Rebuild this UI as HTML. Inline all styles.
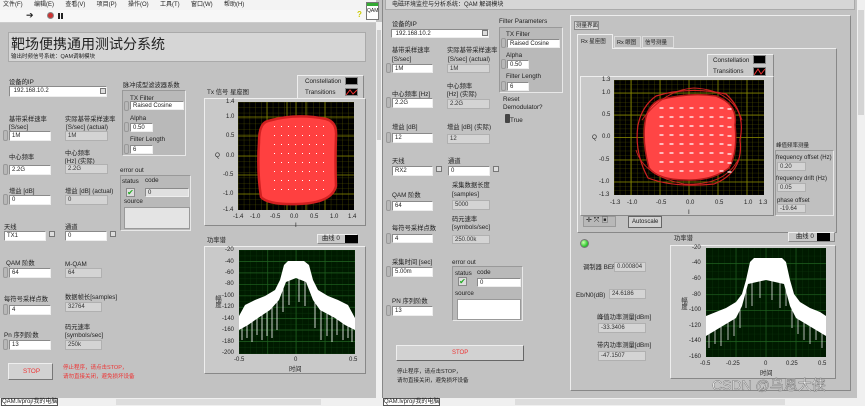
<!DOCTYPE html>
<html><head><meta charset="utf-8">
<style>
*{margin:0;padding:0;box-sizing:border-box}
body{width:865px;height:406px;overflow:hidden;background:#c2c2c2;font-family:"Liberation Sans","Noto Sans CJK SC",sans-serif;font-size:6.3px;color:#222;position:relative}
div,span{position:absolute}
.l{white-space:nowrap;line-height:8px}
.in{background:#fff;border:1px solid #8a8a8a;border-right-color:#eee;border-bottom-color:#eee;padding-left:2px;line-height:8px;font-size:6px}
.ind{background:#d4d4d4;border:1px solid #b0b0b0;padding-left:2px;line-height:8px;font-size:6px;color:#333}
.sp{width:5px;background:#b8b8b8;border:1px solid #999;border-radius:2px}
.btn{width:6px;height:6px;border:1px solid #777;background:#ddd}
.frame{background:#c9c9c9;border:1px solid #eee;border-right-color:#888;border-bottom-color:#888}
.box{background:#b9b9b9;border:1px solid #999;border-right-color:#e8e8e8;border-bottom-color:#e8e8e8}
.tk{font-size:6px;white-space:nowrap}
</style></head><body>

<!-- LEFT WINDOW -->
<div style="left:0;top:0;width:376px;height:10px;background:#f3f3f3"></div>
<div class="l" style="left:3px;top:1px;font-size:6px;word-spacing:4px">文件(F)&nbsp; 编辑(E)&nbsp; 查看(V)&nbsp; 项目(P)&nbsp; 操作(O)&nbsp; 工具(T)&nbsp; 窗口(W)&nbsp; 帮助(H)</div>
<div style="left:0;top:10px;width:376px;height:13px;background:#f7f7f7;border-bottom:1px solid #ccc"></div>
<div class="l" style="left:26px;top:11px;font-size:9px">➔</div>
<div style="left:47px;top:12px;width:7px;height:7px;border-radius:50%;background:#c33;border:1px solid #888"></div>
<div style="left:58px;top:13px;width:2px;height:6px;background:#222"></div>
<div style="left:61px;top:13px;width:2px;height:6px;background:#222"></div>
<div class="l" style="left:357px;top:11px;color:#cc0;font-weight:bold;font-size:8px">?</div>
<div style="left:366px;top:2px;width:13px;height:18px;background:#fff;border:1px solid #777"><div style="left:0;top:0;width:11px;height:3px;background:#3a3"></div><div class="l" style="left:0;top:4px;font-size:5px">QAM</div></div>
<div style="left:376px;top:22px;width:6px;height:376px;background:#f0f0f0"></div>
<div style="left:377px;top:30px;width:4px;height:110px;background:#cdcdcd"></div>

<div style="left:8px;top:32px;width:358px;height:30px;background:#d6d6d6;border:1px solid #aaa"></div>
<div class="l" style="left:11px;top:36px;font-size:14px;line-height:16px">靶场便携通用测试分系统</div>
<div class="l" style="left:11px;top:53px;font-size:5.5px">输出时频信号系统：QAM调制模块</div>

<div class="l" style="left:9px;top:79px">设备的IP</div>
<div class="in" style="left:9px;top:86px;width:98px;height:11px">&nbsp;192.168.10.2</div>
<div class="btn" style="left:100px;top:88px"></div>

<div class="l" style="left:9px;top:116px">基带采样速率</div><div class="l" style="left:9px;top:124px">[S/sec]</div>
<div class="sp" style="left:3px;top:130px;height:11px"></div><div class="in" style="left:9px;top:131px;width:42px;height:10px">1M</div>
<div class="l" style="left:65px;top:116px">实际基带采样速率</div><div class="l" style="left:66px;top:124px">[S/sec] (actual)</div>
<div class="ind" style="left:65px;top:131px;width:43px;height:10px">1M</div>

<div class="l" style="left:9px;top:154px">中心频率</div>
<div class="sp" style="left:3px;top:164px;height:11px"></div><div class="in" style="left:9px;top:165px;width:42px;height:10px">2.2G</div>
<div class="l" style="left:65px;top:150px">中心频率</div><div class="l" style="left:65px;top:158px">[Hz] (实际)</div>
<div class="ind" style="left:65px;top:164px;width:43px;height:10px">2.2G</div>

<div class="l" style="left:9px;top:188px">增益 [dB]</div>
<div class="sp" style="left:3px;top:194px;height:11px"></div><div class="in" style="left:9px;top:195px;width:42px;height:10px">0</div>
<div class="l" style="left:65px;top:188px">增益 [dB] (actual)</div>
<div class="ind" style="left:65px;top:195px;width:43px;height:10px">0</div>

<div class="l" style="left:4px;top:224px">天线</div>
<div class="in" style="left:4px;top:231px;width:42px;height:10px">TX1</div><div class="btn" style="left:49px;top:231px"></div>
<div class="l" style="left:65px;top:224px">通道</div>
<div class="in" style="left:65px;top:231px;width:42px;height:10px">0</div><div class="btn" style="left:110px;top:231px"></div>

<div class="l" style="left:6px;top:260px">QAM 阶数</div>
<div class="sp" style="left:3px;top:267px;height:11px"></div><div class="in" style="left:9px;top:268px;width:42px;height:10px">64</div>
<div class="l" style="left:65px;top:261px">M-QAM</div>
<div class="ind" style="left:65px;top:268px;width:37px;height:10px">64</div>

<div class="l" style="left:4px;top:296px">每符号采样点数</div>
<div class="sp" style="left:3px;top:304px;height:11px"></div><div class="in" style="left:9px;top:305px;width:42px;height:10px">4</div>
<div class="l" style="left:65px;top:294px">数据帧长[samples]</div>
<div class="ind" style="left:65px;top:302px;width:37px;height:10px">32764</div>

<div class="l" style="left:4px;top:332px">Pn 序列阶数</div>
<div class="sp" style="left:3px;top:339px;height:11px"></div><div class="in" style="left:9px;top:340px;width:42px;height:10px">13</div>
<div class="l" style="left:65px;top:324px">码元速率</div><div class="l" style="left:65px;top:332px">[symbols/sec]</div>
<div class="ind" style="left:65px;top:340px;width:37px;height:10px">250k</div>

<div style="left:8px;top:363px;width:45px;height:17px;background:#d2d2d2;border:1px solid #777;border-top-color:#eee;border-left-color:#eee"></div>
<div class="l" style="left:23px;top:368px;color:#e33">STOP</div>
<div class="l" style="left:63px;top:364px;color:#e33;font-size:5.5px">停止程序，请点击STOP，</div>
<div class="l" style="left:63px;top:373px;color:#e33;font-size:5.5px">请勿直接关闭，避免损坏设备</div>

<div class="l" style="left:123px;top:82px">脉冲成型滤波器系数</div>
<div class="box" style="left:122px;top:90px;width:64px;height:66px"></div>
<div class="l" style="left:130px;top:95px">TX Filter</div>
<div class="sp" style="left:124px;top:101px;height:10px"></div><div class="in" style="left:130px;top:101px;width:54px;height:9px">Raised Cosine</div>
<div class="l" style="left:130px;top:115px">Alpha</div>
<div class="sp" style="left:124px;top:122px;height:10px"></div><div class="in" style="left:130px;top:123px;width:23px;height:9px">0.50</div>
<div class="l" style="left:130px;top:136px">Filter Length</div>
<div class="sp" style="left:124px;top:144px;height:10px"></div><div class="in" style="left:130px;top:145px;width:23px;height:9px">6</div>

<div class="l" style="left:120px;top:167px">error out</div>
<div class="box" style="left:120px;top:175px;width:71px;height:56px"></div>
<div class="l" style="left:122px;top:178px">status</div><div class="l" style="left:145px;top:177px">code</div>
<div style="left:126px;top:188px;width:9px;height:9px;background:#ddd;border:1px solid #888;color:#2a2;font-size:8px;line-height:8px;text-align:center">✔</div>
<div class="in" style="left:145px;top:188px;width:44px;height:9px;background:#e0e0e0">0</div>
<div class="l" style="left:124px;top:198px">source</div>
<div style="left:124px;top:207px;width:66px;height:22px;background:#e4e4e4;border:1px solid #999"></div>

<div class="frame" style="left:297px;top:75px;width:67px;height:24px"></div>
<div class="l" style="left:305px;top:78px">Constellation</div><div class="l" style="left:305px;top:89px">Transitions</div>
<div style="left:345px;top:77px;width:13px;height:8px;background:#000;border:1px solid #888"></div>
<div style="left:345px;top:88px;width:13px;height:8px;background:#000;border:1px solid #888"><svg width="11" height="6" style="position:absolute;left:0;top:0"><polyline points="0,6 4,1 7,5 11,1" fill="none" stroke="#e33" stroke-width="1"/></svg></div>
<div class="l" style="left:207px;top:89px">Tx 信号 星座图</div>
<div class="frame" style="left:204px;top:98px;width:162px;height:128px"></div>
<svg style="position:absolute;left:238px;top:102px" width="116" height="108">
<defs><pattern id="gy" width="5.8" height="5.4" patternUnits="userSpaceOnUse"><path d="M0 0H5.8M0 0V5.4" stroke="#5a5a00" stroke-width="0.6"/></pattern></defs>
<rect width="116" height="108" fill="#000"/><rect width="116" height="108" fill="url(#gy)"/>
<path d="M29 0V108M49 0V108M58 0V108M68 0V108M87 0V108M0 15H116M0 34H116M0 54H116M0 73H116M0 92H116" stroke="#8a8a00" stroke-width="0.8"/>
<path d="M30 19 Q58 11 88 17 Q99 20 98 34 Q97 60 98 84 Q94 101 60 102 Q30 103 23 95 Q19 70 21 40 Q21 21 30 19Z" fill="#ff4040" stroke="#d02020" stroke-width="2.5"/>
<g fill="#fff"><g id="rw"><rect x="36" y="24" width="1" height="1"/><rect x="43" y="24" width="1" height="1"/><rect x="50" y="24" width="1" height="1"/><rect x="57" y="24" width="1" height="1"/><rect x="64" y="24" width="1" height="1"/><rect x="71" y="24" width="1" height="1"/><rect x="78" y="24" width="1" height="1"/><rect x="85" y="24" width="1" height="1"/></g>
<use href="#rw" y="9"/><use href="#rw" y="18"/><use href="#rw" y="27"/><use href="#rw" y="36"/><use href="#rw" y="45"/><use href="#rw" y="54"/><use href="#rw" y="63"/></g>
</svg>
<div class="tk" style="left:226px;top:99px">1.4</div><div class="tk" style="left:226px;top:114px">1.0</div><div class="tk" style="left:226px;top:133px">0.5</div><div class="tk" style="left:226px;top:153px">0.0</div><div class="tk" style="left:223px;top:172px">-0.5</div><div class="tk" style="left:223px;top:191px">-1.0</div><div class="tk" style="left:223px;top:207px">-1.4</div>
<div class="tk" style="left:233px;top:214px">-1.4</div><div class="tk" style="left:250px;top:214px">-1.0</div><div class="tk" style="left:270px;top:214px">-0.5</div><div class="tk" style="left:290px;top:214px">0.0</div><div class="tk" style="left:310px;top:214px">0.5</div><div class="tk" style="left:330px;top:214px">1.0</div><div class="tk" style="left:348px;top:214px">1.4</div>
<div class="l" style="left:295px;top:222px">I</div><div class="l" style="left:215px;top:152px">Q</div>

<div class="l" style="left:207px;top:237px">功率谱</div>
<div class="frame" style="left:317px;top:234px;width:41px;height:10px"></div>
<div class="l" style="left:322px;top:235px">曲线 0</div><div style="left:345px;top:235px;width:13px;height:8px;background:#000"></div>
<div class="frame" style="left:204px;top:246px;width:162px;height:128px"></div>
<svg style="position:absolute;left:239px;top:250px" width="116" height="104">
<defs><pattern id="gg" width="5.75" height="5.72" patternUnits="userSpaceOnUse"><path d="M0 0H5.75M0 0V5.72" stroke="#0c3a0c" stroke-width="0.6"/></pattern></defs>
<rect width="116" height="104" fill="#001a00"/><rect width="116" height="104" fill="url(#gg)"/>
<path d="M57 0V104M0 11.4H116M0 22.9H116M0 34.3H116M0 45.8H116M0 57.2H116M0 68.6H116M0 80H116M0 91.5H116M28.7 0V104M86 0V104" stroke="#1f5f1f" stroke-width="0.7"/>
<polygon fill="#fff" points="0,66 6,55 16,50 26,46 36,40 41,30 45,15 49,11 65,11 70,15 74,30 79,40 89,46 99,50 109,55 116,68 116,80 106,75 96,68 81,60 74,50 67,32 57,28 47,32 40,50 31,60 19,68 9,75 0,80"/>
<g stroke="#fff" stroke-width="0.8"><path d="M3 70V90M8 68V88M13 66V92M18 64V85M23 62V90M28 58V86M33 56V88M38 50V80M44 30V62M50 28V55M60 28V52M66 30V56M76 50V78M82 56V90M88 60V86M93 62V92M98 64V85M104 66V90M109 68V88M113 70V92"/></g>
</svg>
<div class="tk" style="left:225px;top:247px">-20</div><div class="tk" style="left:225px;top:259px">-40</div><div class="tk" style="left:225px;top:270px">-60</div><div class="tk" style="left:225px;top:281px">-80</div><div class="tk" style="left:222px;top:293px">-100</div><div class="tk" style="left:222px;top:304px">-120</div><div class="tk" style="left:222px;top:316px">-140</div><div class="tk" style="left:222px;top:327px">-160</div><div class="tk" style="left:222px;top:339px">-180</div><div class="tk" style="left:222px;top:350px">-200</div>
<div class="tk" style="left:234px;top:357px">-0.5</div><div class="tk" style="left:294px;top:357px">0</div><div class="tk" style="left:349px;top:357px">0.5</div>
<div class="l" style="left:289px;top:366px">时间</div><div class="l" style="left:213px;top:295px;writing-mode:vertical-rl">幅度</div>

<div style="left:0;top:398px;width:865px;height:8px;background:#f0f0f0"></div>
<div class="l" style="left:1px;top:398px;font-size:6px;border:1px solid #555;background:#fff;line-height:6px">QAM.lvproj/我的电脑</div>
<div style="left:116px;top:399px;width:205px;height:6px;background:#ddd"></div>
<div class="l" style="left:383px;top:398px;font-size:6px;border:1px solid #555;background:#fff;line-height:6px">QAM.lvproj/我的电脑</div>
<div style="left:515px;top:399px;width:270px;height:6px;background:#ddd"></div>

<!-- RIGHT WINDOW -->
<div style="left:382px;top:0;width:1px;height:398px;background:#888"></div>
<div style="left:385px;top:0;width:470px;height:10px;background:#d6d6d6;border:1px solid #aaa;border-top:none"></div>
<div class="l" style="left:392px;top:1px;font-size:6px">电磁环境监控与分析系统：QAM 解调模块</div>
<div style="left:857px;top:0;width:8px;height:398px;background:#f0f0f0"></div>
<div style="left:858px;top:10px;width:6px;height:105px;background:#d4d4d4"></div>

<div class="l" style="left:392px;top:21px">设备的IP</div>
<div class="in" style="left:391px;top:29px;width:98px;height:9px">&nbsp;192.168.10.2</div><div class="btn" style="left:482px;top:30px"></div>

<div class="l" style="left:392px;top:47px">基带采样速率</div><div class="l" style="left:392px;top:56px">[S/sec]</div>
<div class="sp" style="left:386px;top:63px;height:10px"></div><div class="in" style="left:392px;top:64px;width:41px;height:9px">1M</div>
<div class="l" style="left:447px;top:47px">实际基带采样速率</div><div class="l" style="left:448px;top:56px">[S/sec] (actual)</div>
<div class="ind" style="left:447px;top:64px;width:43px;height:9px">1M</div>

<div class="l" style="left:392px;top:91px">中心频率 [Hz]</div>
<div class="sp" style="left:386px;top:97px;height:11px"></div><div class="in" style="left:392px;top:98px;width:41px;height:10px">2.2G</div>
<div class="l" style="left:447px;top:83px">中心频率</div><div class="l" style="left:447px;top:91px">[Hz] (实际)</div>
<div class="ind" style="left:447px;top:99px;width:43px;height:10px">2.2G</div>

<div class="l" style="left:392px;top:124px">增益 [dB]</div>
<div class="sp" style="left:386px;top:132px;height:11px"></div><div class="in" style="left:392px;top:133px;width:41px;height:10px">12</div>
<div class="l" style="left:447px;top:124px">增益 [dB] (实际)</div>
<div class="ind" style="left:447px;top:134px;width:43px;height:10px">12</div>

<div class="l" style="left:392px;top:158px">天线</div>
<div class="in" style="left:392px;top:166px;width:41px;height:10px">RX2</div><div class="btn" style="left:436px;top:166px"></div>
<div class="l" style="left:448px;top:158px">通道</div>
<div class="in" style="left:448px;top:166px;width:42px;height:10px">0</div><div class="btn" style="left:493px;top:166px"></div>

<div class="l" style="left:392px;top:192px">QAM 阶数</div>
<div class="sp" style="left:386px;top:200px;height:11px"></div><div class="in" style="left:392px;top:201px;width:41px;height:10px">64</div>
<div class="l" style="left:452px;top:182px">采集数据长度</div><div class="l" style="left:452px;top:191px">[samples]</div>
<div class="ind" style="left:452px;top:200px;width:38px;height:10px">5000</div>

<div class="l" style="left:392px;top:225px">每符号采样点数</div>
<div class="sp" style="left:386px;top:233px;height:11px"></div><div class="in" style="left:392px;top:234px;width:41px;height:9px">4</div>
<div class="l" style="left:452px;top:216px">码元速率</div><div class="l" style="left:452px;top:224px">[symbols/sec]</div>
<div class="ind" style="left:452px;top:235px;width:38px;height:9px">250.00k</div>

<div class="l" style="left:392px;top:259px">采集时间 [sec]</div>
<div class="sp" style="left:386px;top:266px;height:11px"></div><div class="in" style="left:392px;top:267px;width:41px;height:10px">5.00m</div>
<div class="l" style="left:392px;top:298px">PN 序列阶数</div>
<div class="sp" style="left:386px;top:305px;height:11px"></div><div class="in" style="left:392px;top:306px;width:41px;height:10px">13</div>

<div class="l" style="left:452px;top:259px">error out</div>
<div class="box" style="left:452px;top:266px;width:71px;height:55px"></div>
<div class="l" style="left:455px;top:270px">status</div><div class="l" style="left:477px;top:269px">code</div>
<div style="left:458px;top:277px;width:9px;height:9px;background:#ddd;border:1px solid #888;color:#2a2;font-size:8px;line-height:8px;text-align:center">✔</div>
<div class="in" style="left:477px;top:278px;width:44px;height:9px">0</div>
<div class="l" style="left:455px;top:290px">source</div>
<div style="left:457px;top:299px;width:64px;height:21px;background:#fff;border:1px solid #999"></div>

<div style="left:396px;top:345px;width:128px;height:16px;background:#d2d2d2;border:1px solid #666;border-top-color:#eee;border-left-color:#eee"></div>
<div class="l" style="left:452px;top:349px;color:#e33;font-size:6px">STOP</div>
<div class="l" style="left:397px;top:368px;font-size:5.5px">停止程序，请点击STOP，</div>
<div class="l" style="left:397px;top:377px;font-size:5.5px">请勿直接关闭，避免损坏设备</div>

<div class="l" style="left:499px;top:18px">Filter Parameters</div>
<div class="box" style="left:499px;top:27px;width:64px;height:66px"></div>
<div class="l" style="left:506px;top:31px">TX Filter</div>
<div class="sp" style="left:501px;top:38px;height:10px"></div><div class="in" style="left:507px;top:39px;width:53px;height:9px">Raised Cosine</div>
<div class="l" style="left:506px;top:52px">Alpha</div>
<div class="sp" style="left:501px;top:59px;height:10px"></div><div class="in" style="left:507px;top:60px;width:22px;height:9px">0.50</div>
<div class="l" style="left:506px;top:73px">Filter Length</div>
<div class="sp" style="left:501px;top:81px;height:10px"></div><div class="in" style="left:507px;top:82px;width:22px;height:9px">6</div>
<div class="l" style="left:503px;top:96px">Reset</div><div class="l" style="left:503px;top:104px">Demodulator?</div>
<div style="left:505px;top:114px;width:5px;height:9px;background:#444;border-radius:1px"></div>
<div class="l" style="left:510px;top:117px">True</div>

<div style="left:570px;top:15px;width:281px;height:376px;border:1px solid #eee;border-right-color:#888;border-bottom-color:#888"></div>
<div style="left:574px;top:21px;width:25px;height:9px;background:#d6d6d6;border:1px solid #888"></div>
<div class="l" style="left:576px;top:22px;font-size:5.5px">测量界面</div>
<div style="left:577px;top:48px;width:260px;height:185px;border:1px solid #eee;border-right-color:#888;border-bottom-color:#888"></div>
<div style="left:577px;top:34px;width:36px;height:15px;background:#c2c2c2;border:1px solid #eee;border-bottom:none"></div>
<div class="l" style="left:581px;top:38px;font-size:5.5px">Rx 星座图</div>
<div style="left:614px;top:36px;width:27px;height:12px;background:#bcbcbc;border:1px solid #ddd"></div>
<div class="l" style="left:617px;top:39px;font-size:5.5px">Rx 眼图</div>
<div style="left:642px;top:36px;width:32px;height:12px;background:#bcbcbc;border:1px solid #ddd"></div>
<div class="l" style="left:645px;top:39px;font-size:5.5px">信号测量</div>

<div class="frame" style="left:707px;top:54px;width:67px;height:23px"></div>
<div class="l" style="left:713px;top:57px">Constellation</div><div class="l" style="left:713px;top:68px">Transitions</div>
<div style="left:753px;top:55px;width:13px;height:9px;background:#000;border:1px solid #888"></div>
<div style="left:753px;top:67px;width:13px;height:9px;background:#000;border:1px solid #888"><svg width="11" height="7" style="position:absolute;left:0;top:0"><polyline points="0,7 4,1 7,6 11,1" fill="none" stroke="#e33"/></svg></div>
<div class="frame" style="left:580px;top:76px;width:194px;height:140px"></div>
<svg style="position:absolute;left:614px;top:80px" width="150" height="115">
<defs><pattern id="gy2" width="5.77" height="4.42" patternUnits="userSpaceOnUse"><path d="M0 0H5.77M0 0V4.42" stroke="#5a5a00" stroke-width="0.6"/></pattern></defs>
<rect width="150" height="115" fill="#000"/><rect width="150" height="115" fill="url(#gy2)"/>
<path d="M17 0V115M46 0V115M75 0V115M104 0V115M133 0V115M0 13H150M0 35H150M0 57.5H150M0 80H150M0 102H150" stroke="#8a8a00" stroke-width="0.8"/>
<path d="M45 20 Q75 12 102 16 Q124 24 121 45 Q124 72 115 88 Q98 101 72 100 Q44 100 35 88 Q28 62 31 42 Q33 26 45 20Z" fill="#ff4545" stroke="#b01818" stroke-width="1.5"/>
<path d="M42 16 Q75 6 112 14 Q132 32 126 60 Q130 92 100 104 Q60 108 34 98 Q20 72 24 45 Q28 26 42 16Z" fill="none" stroke="#d02020" stroke-width="1.2"/>
<path d="M28 40 Q50 10 80 8 Q118 10 128 40 M22 70 Q30 96 70 104 Q110 106 124 80" fill="none" stroke="#c82020" stroke-width="0.9"/>
<g stroke="#fff" stroke-width="1.3" stroke-linecap="round"><g id="dr"><path d="M46 28h3M56 28h3M66 28h3M76 28h3M86 28h3M96 28h3M106 28h3M114 29h3"/></g>
<use href="#dr" y="9"/><use href="#dr" y="18"/><use href="#dr" y="27"/><use href="#dr" y="36"/><use href="#dr" y="45"/><use href="#dr" y="54"/><use href="#dr" y="63"/></g>
</svg>
<div class="tk" style="left:602px;top:77px">1.3</div><div class="tk" style="left:602px;top:90px">1.0</div><div class="tk" style="left:602px;top:112px">0.5</div><div class="tk" style="left:602px;top:134px">0.0</div><div class="tk" style="left:599px;top:157px">-0.5</div><div class="tk" style="left:599px;top:179px">-1.0</div><div class="tk" style="left:599px;top:192px">-1.3</div>
<div class="tk" style="left:610px;top:200px">-1.3</div><div class="tk" style="left:627px;top:200px">-1.0</div><div class="tk" style="left:656px;top:200px">-0.5</div><div class="tk" style="left:686px;top:200px">0.0</div><div class="tk" style="left:715px;top:200px">0.5</div><div class="tk" style="left:744px;top:200px">1.0</div><div class="tk" style="left:759px;top:200px">1.3</div>
<div class="l" style="left:688px;top:209px">I</div><div class="l" style="left:592px;top:134px">Q</div>
<div style="left:583px;top:216px;width:33px;height:11px;background:#b8b8b8;border:1px solid #999"></div>
<div class="l" style="left:586px;top:217px;font-size:7px">✛ ⤧ ▣</div>
<div style="left:628px;top:216px;width:34px;height:12px;background:#d2d2d2;border:1px solid #666"></div>
<div class="l" style="left:632px;top:218px;font-size:6px">Autoscale</div>

<div class="l" style="left:776px;top:142px;font-size:5.5px">峰值频率测量</div>
<div class="box" style="left:775px;top:150px;width:59px;height:66px;background:#c0c0c0"></div>
<div class="l" style="left:776px;top:154px;font-size:6px">frequency offset (Hz)</div>
<div class="ind" style="left:777px;top:162px;width:29px;height:9px">0.20</div>
<div class="l" style="left:776px;top:175px;font-size:6px">frequency drift (Hz)</div>
<div class="ind" style="left:777px;top:183px;width:29px;height:9px">0.05</div>
<div class="l" style="left:777px;top:197px;font-size:6px">phase offset</div>
<div class="ind" style="left:777px;top:204px;width:29px;height:9px">-19.64</div>

<div style="left:580px;top:239px;width:9px;height:9px;border-radius:50%;background:radial-gradient(circle at 35% 35%,#cfffb0,#3c3 60%,#282);border:1px solid #777"></div>
<div class="l" style="left:583px;top:264px">调制器 BER</div>
<div class="ind" style="left:614px;top:262px;width:32px;height:10px">0.000804</div>
<div class="l" style="left:576px;top:292px">Eb/N0(dB)</div>
<div class="ind" style="left:609px;top:289px;width:37px;height:10px">24.6186</div>
<div class="l" style="left:597px;top:314px">峰值功率测量[dBm]</div>
<div class="ind" style="left:598px;top:323px;width:48px;height:10px">-33.3406</div>
<div class="l" style="left:597px;top:342px">带内功率测量[dBm]</div>
<div class="ind" style="left:598px;top:351px;width:48px;height:10px">-47.1507</div>

<div class="l" style="left:674px;top:235px">功率谱</div>
<div class="frame" style="left:788px;top:232px;width:47px;height:10px"></div>
<div class="l" style="left:796px;top:233px">曲线 0</div><div style="left:817px;top:233px;width:13px;height:8px;background:#000"></div>
<div class="frame" style="left:670px;top:245px;width:166px;height:134px"></div>
<svg style="position:absolute;left:706px;top:248px" width="120" height="109">
<defs><pattern id="gg2" width="6" height="7.8" patternUnits="userSpaceOnUse"><path d="M0 0H6M0 0V7.8" stroke="#0c3a0c" stroke-width="0.6"/></pattern></defs>
<rect width="120" height="109" fill="#001a00"/><rect width="120" height="109" fill="url(#gg2)"/>
<path d="M30 0V109M60 0V109M90 0V109M0 15.6H120M0 31H120M0 46.7H120M0 62.3H120M0 78H120M0 93.4H120" stroke="#1f5f1f" stroke-width="0.7"/>
<polygon fill="#fff" points="0,68 10,64 20,60 30,54 36,46 40,32 44,14 48,10 76,10 80,14 84,32 88,46 94,54 104,60 114,64 120,68 120,88 110,82 100,76 90,70 84,58 78,36 60,32 42,36 36,58 30,70 20,76 10,82 0,88"/>
<g stroke="#fff" stroke-width="0.7"><path d="M3 80V100M9 78V96M15 74V98M22 72V92M28 66V88M34 56V80M40 36V60M46 30V58M54 32V50M66 32V52M74 30V60M80 36V58M86 56V80M92 66V86M98 72V92M104 74V96M110 78V92M116 80V100"/></g>
</svg>
<div class="tk" style="left:692px;top:245px">-20</div><div class="tk" style="left:692px;top:260px">-40</div><div class="tk" style="left:692px;top:276px">-60</div><div class="tk" style="left:692px;top:292px">-80</div><div class="tk" style="left:689px;top:307px">-100</div><div class="tk" style="left:689px;top:323px">-120</div><div class="tk" style="left:689px;top:338px">-140</div><div class="tk" style="left:689px;top:354px">-160</div>
<div class="tk" style="left:700px;top:361px">-0.5</div><div class="tk" style="left:726px;top:361px">-0.25</div><div class="tk" style="left:764px;top:361px">0</div><div class="tk" style="left:786px;top:361px">0.25</div><div class="tk" style="left:818px;top:361px">0.5</div>
<div class="l" style="left:760px;top:370px">时间</div><div class="l" style="left:679px;top:297px;writing-mode:vertical-rl">幅度</div>

<div class="l" style="left:712px;top:376px;font-size:14px;line-height:18px;color:#f4f4f4;-webkit-text-stroke:0.5px #777">CSDN @乌恩大侠</div>
</body></html>
